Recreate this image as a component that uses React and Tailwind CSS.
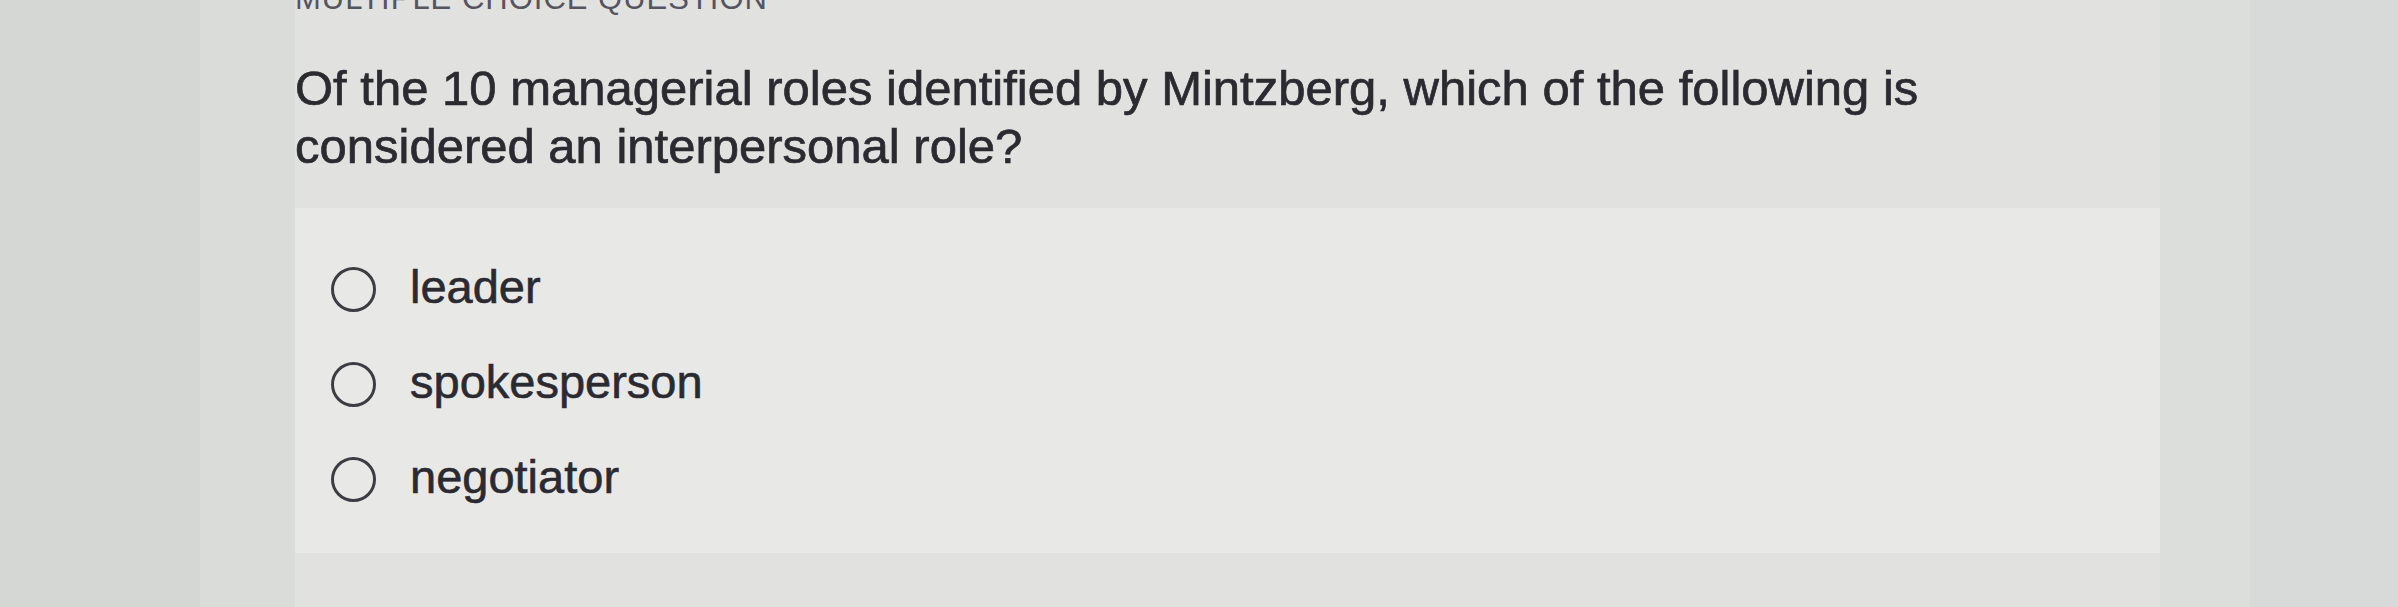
import React from "react";

const options = ["leader", "spokesperson", "negotiator"];

export default function App() {
  return (
    <div
      className="w-full h-[607px] overflow-hidden flex bg-[#dfe0de] text-[#2b2a31]"
      style={{ fontFamily: "'Liberation Sans', Arial, sans-serif" }}
    >
      {/* left margin bands */}
      <div className="w-[200px] shrink-0 bg-[#d4d7d4]" />
      <div className="w-[95px] shrink-0 bg-[#dadcd9]" />

      {/* question column */}
      <div className="w-[1865px] shrink-0 flex flex-col bg-[#e1e2e0]">
        <div className="-mt-[16px] h-[30px] text-[31px] leading-[30px] tracking-[1px] text-[#55545f] whitespace-nowrap">
          MULTIPLE CHOICE QUESTION
        </div>

        <p className="mt-[45px] text-[49px] leading-[58px] w-[1760px] [-webkit-text-stroke:0.7px_#2b2a31]">
          Of the 10 managerial roles identified by Mintzberg, which of the following is considered an interpersonal role?
        </p>

        <div className="mt-[33px] h-[345px] shrink-0 bg-[#e8e9e7] flex flex-col pt-[58px] pl-[36px] gap-[49px]">
          {options.map((o) => (
            <label key={o} className="flex items-center gap-[34px] h-[46px]">
              <span className="w-[45px] h-[45px] rounded-full border-[3px] border-[#3d3c44] shrink-0" />
              <span className="text-[47px] leading-[46px] -mt-[4px] [-webkit-text-stroke:0.6px_#2b2a31]">{o}</span>
            </label>
          ))}
        </div>
      </div>

      {/* right margin bands */}
      <div className="w-[90px] shrink-0 bg-[#dcdedc]" />
      <div className="flex-1 bg-[#d7dad8]" />
    </div>
  );
}
